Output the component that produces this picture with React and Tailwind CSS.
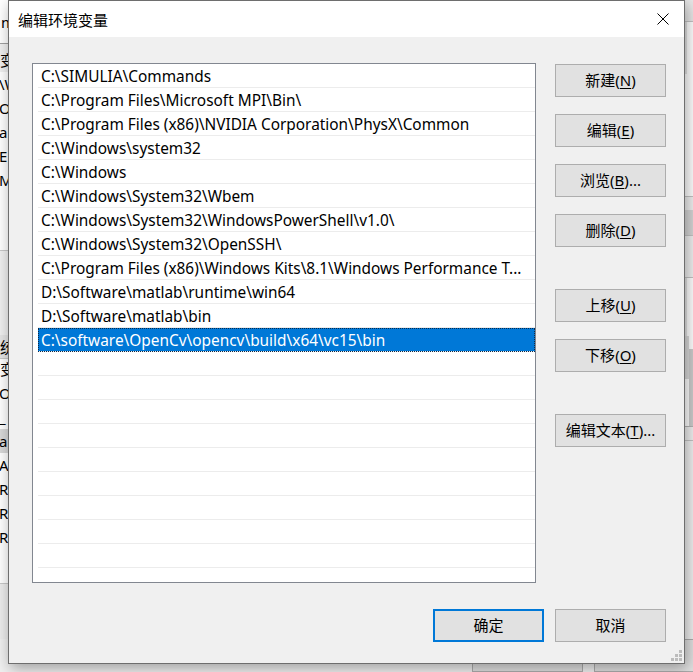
import React from 'react';

const paths = [
  'C:\\SIMULIA\\Commands',
  'C:\\Program Files\\Microsoft MPI\\Bin\\',
  'C:\\Program Files (x86)\\NVIDIA Corporation\\PhysX\\Common',
  'C:\\Windows\\system32',
  'C:\\Windows',
  'C:\\Windows\\System32\\Wbem',
  'C:\\Windows\\System32\\WindowsPowerShell\\v1.0\\',
  'C:\\Windows\\System32\\OpenSSH\\',
  'C:\\Program Files (x86)\\Windows Kits\\8.1\\Windows Performance T...',
  'D:\\Software\\matlab\\runtime\\win64',
  'D:\\Software\\matlab\\bin',
  'C:\\software\\OpenCv\\opencv\\build\\x64\\vc15\\bin',
];
const selectedIndex = 11;
const emptyRows = 10;

function Mnemonic({ before, letter, after }) {
  return (
    <span>
      {before}(<span className="underline underline-offset-2">{letter}</span>){after}
    </span>
  );
}

function Btn({ children, primary }) {
  return (
    <button
      className={
        primary
          ? 'w-[111px] h-[33px] bg-[#e1e1e1] border-2 border-[#0078d7] flex items-center justify-center'
          : 'w-[111px] h-[33px] bg-[#e1e1e1] border border-[#adadad] flex items-center justify-center'
      }
    >
      {children}
    </button>
  );
}

function BackgroundWindow() {
  const leftTop = ['\\W', 'Or', 'a', 'E', 'M'];
  const leftBottom = ['OS', '_', 'a', 'A', 'R', 'R', 'R'];
  return (
    <div className="flex flex-col h-full">
      <div className="flex h-[667px]">
        {/* left edge of the window behind */}
        <div className="w-[8px] overflow-hidden flex flex-col text-[15px] leading-[24px] whitespace-nowrap">
          <div className="h-[43px] bg-white flex items-center pl-px">m</div>
          <div className="h-px bg-[#a0a0a0]" />
          <div className="h-[206px] bg-white flex flex-col">
            <div className="h-[28px] bg-[#f0f0f0] flex items-end">变量</div>
            {leftTop.map((t, i) => (
              <div key={i} className="h-[24px] -ml-[1px]">{t}</div>
            ))}
          </div>
          <div className="h-px bg-[#c8c8c8]" />
          <div className="h-[84px] bg-[#f0f0f0]" />
          <div className="h-[24px] bg-[#e5e5e5] border-b border-[#c8c8c8] flex items-center">统</div>
          <div className="h-[224px] bg-white flex flex-col">
            <div className="h-[22px] flex items-end">变量</div>
            {leftBottom.map((t, i) => (
              <div key={i} className={i === 2 ? 'h-[24px] bg-[#d9d9d9] -ml-[1px]' : 'h-[24px] -ml-[1px]'}>{t}</div>
            ))}
          </div>
          <div className="flex-1 bg-[#ececec] border-t border-[#c8c8c8]" />
        </div>

        <div className="flex-1" />

        {/* right edge of the window behind */}
        <div className="w-[9px] flex flex-col">
          <div className="h-[22px] bg-[#e8e8e8] border-b border-[#c4c4c4]" />
          <div className="h-[52px] bg-white border-l-[3px] border-[#e4e4e4]" />
          <div className="h-[122px] bg-white" />
          <div className="h-[14px] bg-[#f0f0f0] border-t border-[#c4c4c4]" />
          <div className="h-[25px] bg-[#d6d6d6]" />
          <div className="h-[15px] bg-[#f0f0f0] border-t border-[#c4c4c4]" />
          <div className="h-[28px] bg-[#f0f0f0] border-b border-[#c4c4c4]" />
          <div className="h-[58px] bg-white border-l-[3px] border-[#e4e4e4]" />
          <div className="h-[90px] bg-white flex">
            <div className="w-[5px] h-[43px] bg-[#dadada]" />
            <div className="w-[4px] mt-[13px] h-[77px] bg-[#cdcdcd]" />
          </div>
          <div className="h-px bg-[#b4b4b4]" />
          <div className="h-[14px] bg-[#f0f0f0] border-b border-[#c4c4c4]" />
          <div className="flex-1 bg-[#f0f0f0]" />
        </div>
      </div>
      <div className="flex gap-[11px] pl-[472px]">
        <div className="w-[111px] h-[33px] shrink-0 bg-[#e1e1e1] border border-[#adadad]" />
        <div className="w-[111px] h-[33px] shrink-0 bg-[#e1e1e1] border border-[#adadad]" />
      </div>
    </div>
  );
}

export default function App() {
  return (
    <div className="relative w-[693px] h-[672px] overflow-hidden bg-[#f0f0f0] text-black text-[15px] font-['Noto_Sans','Noto_Sans_CJK_SC',sans-serif]">
      <BackgroundWindow />

      {/* 编辑环境变量 dialog */}
      <div className="absolute left-[8px] top-0 w-[677px] h-[664px] border border-[#6e6e6e] bg-[#f0f0f0] flex flex-col shadow-[2px_4px_14px_rgba(0,0,0,0.35)]">
        <div className="h-[36px] bg-white flex items-center justify-between pl-[9px] pr-[15px]">
          <span className="leading-none pt-[2px]">编辑环境变量</span>
          <svg width="12" height="12" viewBox="0 0 12 12">
            <path d="M0.5 0.5 L11.5 11.5 M11.5 0.5 L0.5 11.5" stroke="#000" strokeWidth="1" fill="none" />
          </svg>
        </div>

        <div className="flex-1 flex flex-col pl-[23px] pr-[18px] pt-[26px] pb-[21px]">
          <div className="flex gap-[19px]">
            <div className="w-[504px] h-[520px] shrink-0 border border-[#828790] bg-white overflow-hidden pl-[5px] text-[15.4px]">
              {paths.map((p, i) => (
                <div
                  key={i}
                  className={
                    i === selectedIndex
                      ? 'h-[24px] border-b border-[#ececec] bg-[#0078d7] text-white px-[3px] pt-[3px] flex items-center whitespace-nowrap outline-1 outline-dotted -outline-offset-1 outline-[#0a2a4a]'
                      : 'h-[24px] border-b border-[#ececec] px-[3px] pt-[3px] flex items-center whitespace-nowrap'
                  }
                >
                  {p}
                </div>
              ))}
              {Array.from({ length: emptyRows }).map((_, i) => (
                <div key={'e' + i} className="h-[24px] border-b border-[#ececec]" />
              ))}
            </div>

            <div className="flex flex-col pt-px">
              <div className="flex flex-col gap-[17px]">
                <Btn><Mnemonic before="新建" letter="N" /></Btn>
                <Btn><Mnemonic before="编辑" letter="E" /></Btn>
                <Btn><Mnemonic before="浏览" letter="B" after="..." /></Btn>
                <Btn><Mnemonic before="删除" letter="D" /></Btn>
              </div>
              <div className="flex flex-col gap-[17px] mt-[42px]">
                <Btn><Mnemonic before="上移" letter="U" /></Btn>
                <Btn><Mnemonic before="下移" letter="O" /></Btn>
              </div>
              <div className="mt-[42px]">
                <Btn><Mnemonic before="编辑文本" letter="T" after="..." /></Btn>
              </div>
            </div>
          </div>

          <div className="mt-[26px] flex justify-end gap-[11px]">
            <Btn primary>确定</Btn>
            <Btn>取消</Btn>
          </div>
        </div>

        <svg className="absolute right-[1px] bottom-[1px]" width="12" height="12" viewBox="0 0 12 12">
          <g fill="#bcbcbc">
            <rect x="8" y="0" width="3" height="3" />
            <rect x="4" y="4" width="3" height="3" />
            <rect x="8" y="4" width="3" height="3" />
            <rect x="0" y="8" width="3" height="3" />
            <rect x="4" y="8" width="3" height="3" />
            <rect x="8" y="8" width="3" height="3" />
          </g>
        </svg>
      </div>
    </div>
  );
}
